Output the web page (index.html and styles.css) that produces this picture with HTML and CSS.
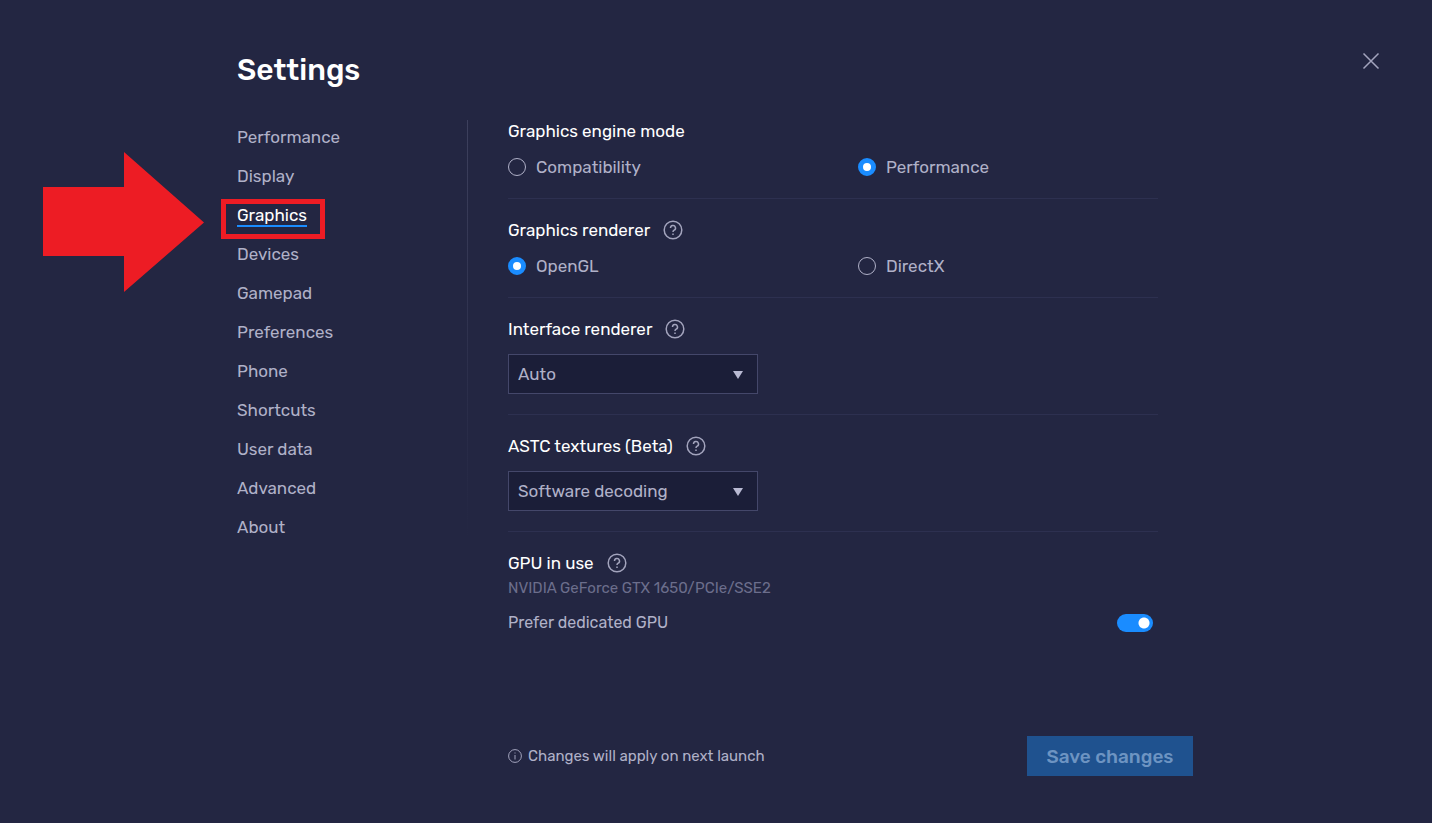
FILE: index.html
```html
<!DOCTYPE html>
<html lang="en">
<head>
  <meta charset="UTF-8">
  <meta name="viewport" content="width=device-width, initial-scale=1.0">
  <title>Settings</title>
  <link rel="stylesheet" href="styles.css">
</head>
<body>

  <button class="close-btn" type="button" aria-label="Close">
    <svg width="18" height="18" viewBox="0 0 18 18"><path d="M1.5 1.5l15 15M16.500 1.500l-15 15"/></svg>
  </button>

  <div class="settings">
    <h1>Settings</h1>

    <div class="settings-body">
      <!-- Sidebar -->
      <nav class="sidebar">
        <ul>
          <li><a href="#performance">Performance</a></li>
          <li><a href="#display">Display</a></li>
          <li class="marked">
            <svg class="arrow" width="161" height="140" viewBox="0 0 161 140"><path d="M0 35h81V0l80 70.500L81 140v-36H0z"/></svg>
            <a class="active" href="#graphics">Graphics</a>
          </li>
          <li><a href="#devices">Devices</a></li>
          <li><a href="#gamepad">Gamepad</a></li>
          <li><a href="#preferences">Preferences</a></li>
          <li><a href="#phone">Phone</a></li>
          <li><a href="#shortcuts">Shortcuts</a></li>
          <li><a href="#userdata">User data</a></li>
          <li><a href="#advanced">Advanced</a></li>
          <li><a href="#about">About</a></li>
        </ul>
      </nav>

      <!-- Graphics page -->
      <main class="content">
        <section class="group">
          <h2>Graphics engine mode</h2>
          <div class="radios">
            <label><input type="radio" name="engine">Compatibility</label>
            <label><input type="radio" name="engine" checked>Performance</label>
          </div>
        </section>

        <section class="group">
          <h2>Graphics renderer
            <svg class="help" width="20" height="20" viewBox="0 0 20 20"><circle cx="10" cy="10" r="8.800"/><path d="M7.500 8a2.500 2.500 0 1 1 3.700 2.200c-.8.5-1.200.9-1.200 1.900M10 13.600v1.400"/></svg>
          </h2>
          <div class="radios">
            <label><input type="radio" name="renderer" checked>OpenGL</label>
            <label><input type="radio" name="renderer">DirectX</label>
          </div>
        </section>

        <section class="group">
          <h2><label for="interface">Interface renderer</label>
            <svg class="help" width="20" height="20" viewBox="0 0 20 20"><circle cx="10" cy="10" r="8.800"/><path d="M7.500 8a2.500 2.500 0 1 1 3.700 2.200c-.8.5-1.200.9-1.200 1.900M10 13.600v1.400"/></svg>
          </h2>
          <div class="dropdown">
            <select id="interface">
              <option>Auto</option>
            </select>
          </div>
        </section>

        <section class="group">
          <h2><label for="astc">ASTC textures (Beta)</label>
            <svg class="help" width="20" height="20" viewBox="0 0 20 20"><circle cx="10" cy="10" r="8.800"/><path d="M7.500 8a2.500 2.500 0 1 1 3.700 2.200c-.8.5-1.200.9-1.200 1.900M10 13.600v1.400"/></svg>
          </h2>
          <div class="dropdown">
            <select id="astc">
              <option>Software decoding</option>
            </select>
          </div>
        </section>

        <section class="group">
          <h2>GPU in use
            <svg class="help" width="20" height="20" viewBox="0 0 20 20"><circle cx="10" cy="10" r="8.800"/><path d="M7.500 8a2.500 2.500 0 1 1 3.700 2.200c-.8.5-1.200.9-1.200 1.900M10 13.600v1.400"/></svg>
          </h2>
          <p class="gpu-name">NVIDIA GeForce GTX 1650/PCIe/SSE2</p>
          <div class="toggle-row">
            <label for="dedicated">Prefer dedicated GPU</label>
            <input class="toggle" type="checkbox" id="dedicated" checked>
          </div>
        </section>
      </main>
    </div>

    <!-- Footer -->
    <footer>
      <p class="note">
        <svg width="14" height="14" viewBox="0 0 14 14"><circle cx="7" cy="7" r="6.400"/><path d="M7 3.500v1M7 6v4.500"/></svg>
        Changes will apply on next launch
      </p>
      <button class="save-btn" type="submit" disabled>Save changes</button>
    </footer>
  </div>

</body>
</html>
```
FILE: styles.css
```css
*, *::before, *::after {
  box-sizing: border-box;
}

body {
  margin: 0;
  background-color: #232642;
  color: #b0b1c8;
  font-family: Rubik, Roboto, sans-serif;
  font-size: 17px;
  line-height: 22px;
}

h1, h2, p, ul {
  margin: 0;
  padding: 0;
}

svg {
  display: block;
  fill: none;
  stroke: #a3a4bd;
}

.close-btn {
  position: absolute;
  top: 44px;
  right: 44px;
  padding: 8px;
  background: none;
  border: none;
  cursor: pointer;
}

.close-btn svg {
  stroke-width: 1.5;
}

.settings {
  display: flex;
  flex-direction: column;
  max-width: 958px;
  min-height: 100vh;
  margin: 0 auto;
  padding: 50px 0 47px;
}

h1 {
  color: #fff;
  font-size: 30px;
  font-weight: 500;
  line-height: 40px;
}

.settings-body {
  display: flex;
  gap: 40px;
  margin-top: 30px;
}

/* Sidebar */
.sidebar {
  flex: 0 0 231px;
  padding-top: 6px;
  background: linear-gradient(#3d405d, #33365380 50%, #23264200 420px) right top / 1px 100% no-repeat;
}

.sidebar ul {
  display: flex;
  flex-direction: column;
  gap: 19px;
  list-style: none;
}

.sidebar li {
  height: 20px;
}

.sidebar a {
  display: inline-block;
  color: #b0b1c8;
  line-height: 20px;
  text-decoration: none;
}

.sidebar a.active {
  color: #fff;
  border-bottom: 2px solid #1a8cff;
}

.sidebar .marked {
  position: relative;
}

.marked::before {
  content: "";
  position: absolute;
  top: -5px;
  left: -16px;
  width: 104px;
  height: 40px;
  border: 5px solid #ed1c24;
  pointer-events: none;
}

.arrow {
  position: absolute;
  top: -52px;
  left: -194px;
  fill: #ed1c24;
  stroke: none;
}

/* Content */
.content {
  flex: 0 1 650px;
}

.group {
  padding: 20px 0;
  border-bottom: 1px solid #2d3050;
}

.group:first-child {
  padding-top: 0;
}

.group:last-child {
  border-bottom: none;
}

h2 {
  display: flex;
  align-items: center;
  gap: 13px;
  margin-bottom: 14px;
  color: #fff;
  font-size: 17px;
  font-weight: 400;
  line-height: 22px;
}

.help {
  stroke-width: 1.5;
}

.radios {
  display: flex;
}

.radios label {
  display: flex;
  flex: 0 0 350px;
  align-items: center;
  gap: 10px;
}

.radios label:last-child {
  flex: 1;
}

input[type="radio"] {
  width: 18px;
  height: 18px;
  margin: 0;
  appearance: none;
  border: 1px solid #b0b1c8;
  border-radius: 50%;
}

input[type="radio"]:checked {
  background-color: #fff;
  border: 5px solid #1a8cff;
}

.dropdown {
  position: relative;
  max-width: 250px;
}

.dropdown::after {
  content: "";
  position: absolute;
  top: 17px;
  right: 15px;
  border: 5px solid transparent;
  border-top: 8px solid #b9bad3;
  border-bottom: none;
  pointer-events: none;
}

select {
  display: block;
  width: 100%;
  height: 40px;
  padding: 0 9px;
  appearance: none;
  background-color: #1b1e38;
  border: 1px solid #44476a;
  border-radius: 0;
  color: #b0b1c8;
  font: inherit;
}

.gpu-name {
  margin-top: -10px;
  color: #6c6e8c;
  font-size: 15px;
  line-height: 20px;
}

.toggle-row {
  display: flex;
  justify-content: space-between;
  align-items: center;
  margin-top: 14px;
  padding-right: 5px;
  font-size: 16px;
}

.toggle {
  width: 36px;
  height: 18px;
  margin: 0;
  appearance: none;
  background: radial-gradient(circle at 27px 9px, #fff 5px, #1a8cff 6px);
  border-radius: 9px;
}

/* Footer */
footer {
  display: flex;
  justify-content: space-between;
  align-items: center;
  margin-top: auto;
  padding: 0 2px 0 271px;
}

.note {
  display: flex;
  align-items: center;
  gap: 6px;
  font-size: 15px;
}

.save-btn {
  min-width: 166px;
  height: 40px;
  padding: 0 19px;
  background-color: #1f528f;
  border: none;
  color: #6d94c2;
  font-family: inherit;
  font-size: 19px;
  font-weight: 500;
}
```
